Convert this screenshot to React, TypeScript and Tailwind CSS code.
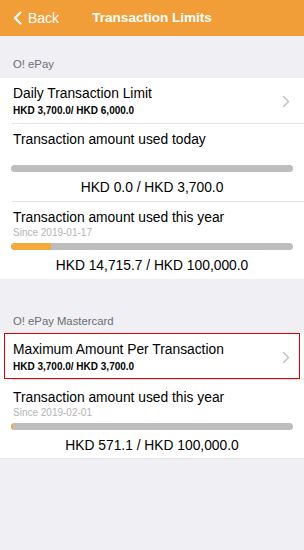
import React from "react";

const Chevron = () => (
  <svg width="8" height="13" viewBox="0 0 8 13" className="shrink-0">
    <path d="M1.5 1.5 L6.5 6.5 L1.5 11.5" fill="none" stroke="#c4c4c8" strokeWidth="1.6" strokeLinecap="round" strokeLinejoin="round" />
  </svg>
);

const Bar = ({ pct }: { pct: number }) => (
  <div className="h-[7px] mx-[11px] rounded-full bg-[#bdbdbd] overflow-hidden">
    <div className="h-full bg-[#f4a93c] rounded-l-full" style={{ width: `${pct}%` }} />
  </div>
);

export default function App() {
  return (
    <div className="w-[304px] h-[550px] bg-[#efeff4] text-black" style={{ fontFamily: "'Liberation Sans', Arial, sans-serif" }}>
      <div className="h-[36px] bg-[#f19e38] flex items-center relative">
        <div className="flex items-center pl-[13px] text-white text-[14px] gap-[6px]">
          <svg width="9" height="14" viewBox="0 0 9 14">
            <path d="M7.5 1.5 L2 7 L7.5 12.5" fill="none" stroke="white" strokeWidth="2.2" strokeLinecap="round" strokeLinejoin="round" />
          </svg>
          <span>Back</span>
        </div>
        <div className="absolute left-0 right-0 text-center text-white font-bold text-[13.5px] pointer-events-none">Transaction Limits</div>
      </div>

      <div className="h-[42px] flex items-end pl-[13px] pb-[5px] text-[11.3px] text-[#6d6d72]">O! ePay</div>

      <div className="bg-white">
        <div className="h-[45px] flex items-center pl-[13px] pr-[14px] pt-[2px]">
          <div className="flex-1">
            <div className="text-[13.8px] leading-[18px]">Daily Transaction Limit</div>
            <div className="text-[10px] font-bold leading-[14px] mt-[1px]">HKD 3,700.0/ HKD 6,000.0</div>
          </div>
          <Chevron />
        </div>
        <div className="ml-[12px] h-px bg-[#e5e5ea]" />
        <div className="h-[77px] pt-[7px]">
          <div className="pl-[13px] text-[13.8px] leading-[18px]">Transaction amount used today</div>
          <div className="mt-[16px]"><Bar pct={0} /></div>
          <div className="text-center text-[13.8px] leading-[18px] mt-[7px]">HKD 0.0 / HKD 3,700.0</div>
        </div>
        <div className="ml-[12px] h-px bg-[#e5e5ea]" />
        <div className="h-[77px] pt-[7px]">
          <div className="pl-[13px] text-[13.8px] leading-[18px]">Transaction amount used this year</div>
          <div className="pl-[13px] text-[10px] leading-[12px] text-[#b4b4b4]">Since 2019-01-17</div>
          <div className="mt-[4px]"><Bar pct={14.2} /></div>
          <div className="text-center text-[13.8px] leading-[18px] mt-[7px]">HKD 14,715.7 / HKD 100,000.0</div>
        </div>
      </div>

      <div className="h-[54px] flex items-end pl-[13px] pb-[3px] text-[11.3px] text-[#6d6d72]">O! ePay Mastercard</div>

      <div className="bg-white">
        <div className="h-[46px] mx-[4px] border border-[#e00000] flex items-center pl-[8px] pr-[9px] pt-[3px]">
          <div className="flex-1">
            <div className="text-[13.8px] leading-[18px]">Maximum Amount Per Transaction</div>
            <div className="text-[10px] font-bold leading-[14px] mt-[1px]">HKD 3,700.0/ HKD 3,700.0</div>
          </div>
          <Chevron />
        </div>
        <div className="ml-[12px] h-px bg-[#e5e5ea]" />
        <div className="h-[78px] pt-[9px]">
          <div className="pl-[13px] text-[13.8px] leading-[18px]">Transaction amount used this year</div>
          <div className="pl-[13px] text-[10px] leading-[12px] text-[#b4b4b4]">Since 2019-02-01</div>
          <div className="mt-[4px]"><Bar pct={0.6} /></div>
          <div className="text-center text-[13.8px] leading-[18px] mt-[7px]">HKD 571.1 / HKD 100,000.0</div>
        </div>
        <div className="h-px bg-[#e5e5ea]" />
      </div>
    </div>
  );
}
